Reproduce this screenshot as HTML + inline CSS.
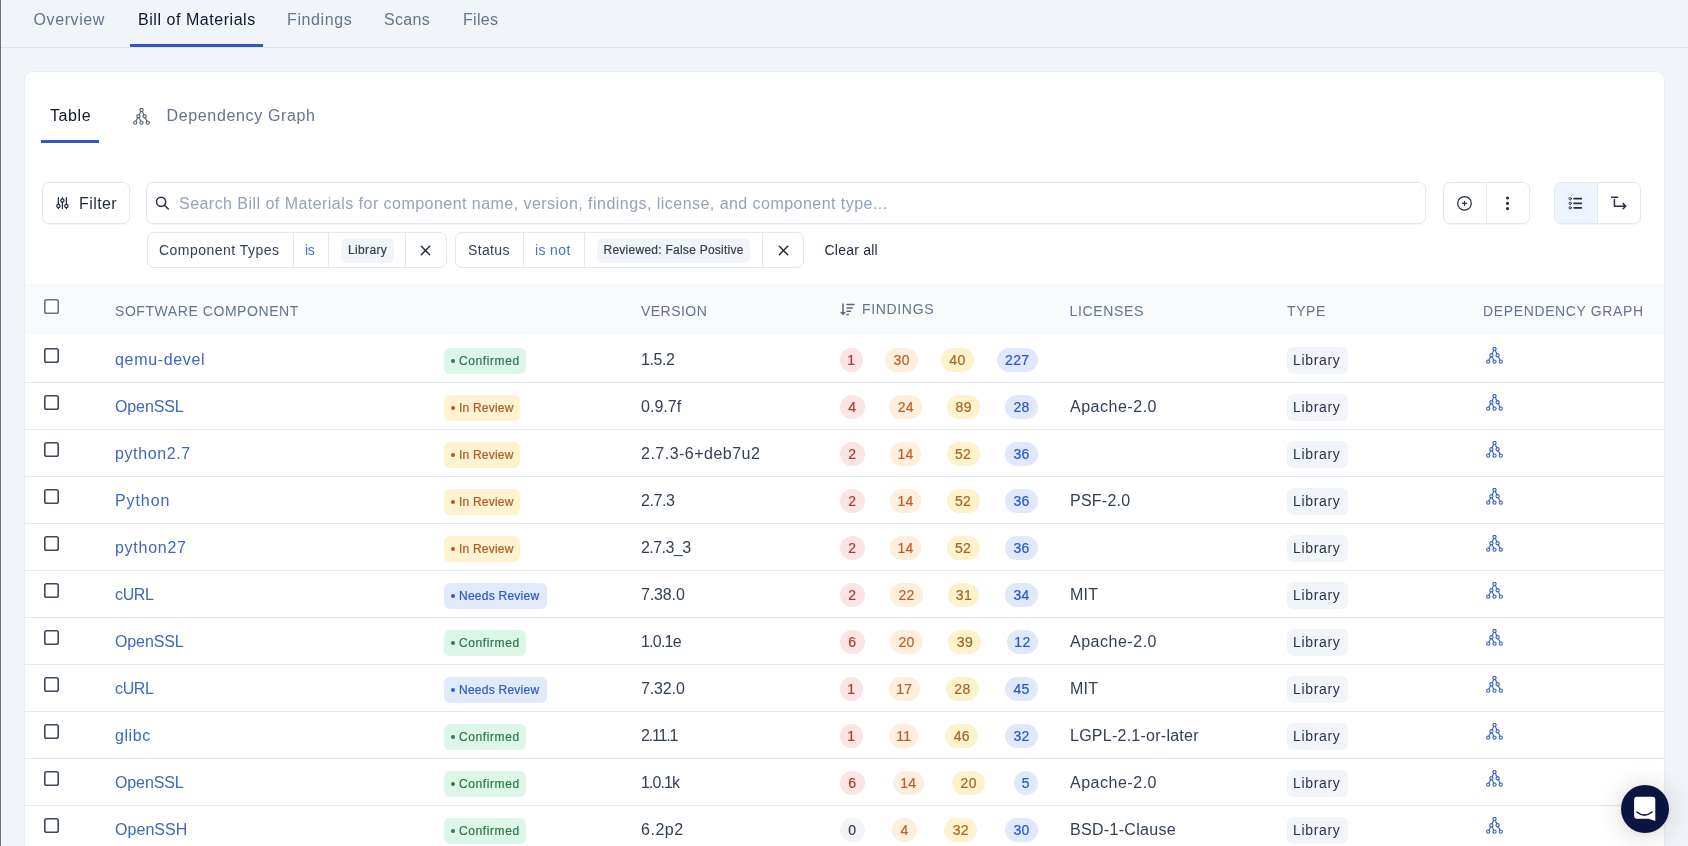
<!DOCTYPE html>
<html><head><meta charset="utf-8">
<style>
*{box-sizing:border-box;margin:0;padding:0}
html,body{width:1688px;height:846px;overflow:hidden}
body{background:#f1f4f9;font-family:"Liberation Sans",sans-serif;position:relative;color:#334155}
.abs{position:absolute;white-space:nowrap}
div{position:absolute;white-space:nowrap}
.lbar{left:0;top:0;width:1px;height:846px;background:#6b7280}
.topsep{left:1px;top:47px;width:1687px;height:1px;background:#e2e6ec}
.ttab{top:10px;font-size:16px;line-height:20px;color:#64748b;letter-spacing:.5px}
.ttab.act{color:#0f172a}
.tund{left:130px;top:44px;width:133px;height:3px;background:#2f5cb8}
.card{left:25px;top:72px;width:1639px;height:800px;background:#fff;border-radius:8px;box-shadow:0 0 0 1px #e9edf2,0 1px 3px rgba(15,23,42,.05)}
.itab{top:106px;font-size:16px;line-height:20px;letter-spacing:.55px}
.iund{left:41px;top:140px;width:58px;height:3px;background:#2f5cb8}
.btn{top:182px;height:42px;border:1px solid #e4e7ee;border-radius:7px;background:#fff;box-shadow:0 1px 1px rgba(15,23,42,.04)}
.fchip{top:232px;height:36px;border:1px solid #e4e7ee;border-radius:7px;background:#fff;font-size:14px;line-height:34px;color:#334155}
.fchip span{position:absolute;top:0;white-space:nowrap}
.fdiv{position:absolute;top:0;width:1px;height:34px;background:#e4e7ee}
.val{position:absolute;top:5px;height:25px;border-radius:6px;background:#f1f4f9;font-size:12px;line-height:25px;color:#334155;-webkit-text-stroke:.2px #334155}
.thead{left:25px;top:284px;width:1639px;height:51px;background:#f8fafc}
.th{top:303px;font-size:14px;line-height:16px;color:#64748b;letter-spacing:.5px}
.cb{position:absolute}
.nm{left:115px;font-size:16px;line-height:20px;color:#3d68c0;letter-spacing:.5px}
.ver{left:641px;font-size:16px;line-height:20px;color:#334155;letter-spacing:.35px}
.lic{left:1070px;font-size:16px;line-height:20px;color:#334155;letter-spacing:.45px}
.badge{left:444px;height:26px;border-radius:6px;font-size:12px;line-height:26px;padding-left:15px;-webkit-text-stroke:.22px currentColor}
.badge i{position:absolute;left:7px;top:11px;width:4px;height:4px;border-radius:50%}
.bg{background:#dcf7e7;color:#2f7652}.bg i{background:#2f7652}
.by{background:#fdf3d0;color:#b25a28}.by i{background:#b25a28}
.bb{background:#e0eafb;color:#2f5bc2}.bb i{background:#2f5bc2}
.pill{height:24px;border-radius:12px;font-size:14px;line-height:24px;text-align:center;letter-spacing:.3px;-webkit-text-stroke:.2px currentColor}
.pr{background:#fbe4e4;color:#b2382a}
.po{background:#fdeedd;color:#bd5e28}
.py{background:#fcf3cd;color:#a66526}
.pb{background:#dfe9fb;color:#2a56cf}
.pg{background:#f1f3f6;color:#334155}
.lib{left:1287px;width:61px;height:27px;border-radius:6px;background:#f1f4f9;font-size:14px;line-height:27px;color:#283447;padding-left:6px;letter-spacing:.65px}
.rsep{left:25px;width:1639px;height:1px;background:#e5e8ee}
.chat{left:1620.5px;top:785px;width:48px;height:48px;border-radius:50%;background:#0c1440;box-shadow:0 1px 6px rgba(0,0,0,.06),0 2px 32px rgba(0,0,0,.16)}
</style></head>
<body style="will-change:transform">
<div class="lbar"></div>
<div class="topsep"></div>
<div class="ttab" style="left:33.5px;letter-spacing:.596px">Overview</div>
<div class="ttab act" style="left:138px;letter-spacing:.545px">Bill of Materials</div>
<div class="ttab" style="left:287px;letter-spacing:.603px">Findings</div>
<div class="ttab" style="left:384px;letter-spacing:.308px">Scans</div>
<div class="ttab" style="left:463px;letter-spacing:.305px">Files</div>
<div class="tund"></div>

<div class="card"></div>
<div class="itab" style="left:50px;color:#0f172a;letter-spacing:.587px">Table</div>
<svg class="abs" style="left:132.5px;top:108px" width="17" height="17" viewBox="0 0 17 17" fill="none" stroke="#5a6779" stroke-width="1.15" stroke-linecap="round"><path d="M7.8 3.3L6.1 6.8M9.2 3.3L10.9 6.8M4.8 9.6L2.9 13.2M6.0 9.6L7.8 13.2M12.2 9.6L14.1 13.2"/><circle cx="8.5" cy="1.9" r="1.6"/><circle cx="5.4" cy="8.2" r="1.6"/><circle cx="11.6" cy="8.2" r="1.6"/><circle cx="2.2" cy="14.6" r="1.6"/><circle cx="8.5" cy="14.6" r="1.6"/><circle cx="14.8" cy="14.6" r="1.6"/></svg>
<div class="itab" style="left:166.5px;color:#64748b;letter-spacing:.649px">Dependency Graph</div>
<div class="iund"></div>

<!-- toolbar -->
<div class="btn" style="left:42px;width:88px">
  <div style="left:36px;top:11px;font-size:16px;line-height:20px;color:#1e293b;letter-spacing:.415px">Filter</div>
</div>
<svg class="abs" style="left:54px;top:195px" width="17" height="17" viewBox="0 0 17 17" fill="#fff" stroke="#253043" stroke-width="1.3" stroke-linecap="round">
  <path d="M4.4 2.6V13.6M8.4 2.6V13.6M12.4 2.6V13.6"/>
  <circle cx="4.4" cy="11.0" r="1.6"/><circle cx="8.4" cy="5.5" r="1.6"/><circle cx="12.4" cy="11.0" r="1.6"/>
</svg>
<div class="btn" style="left:146px;width:1280px">
  <div style="left:32px;top:11px;font-size:16px;line-height:20px;color:#94a3b8;letter-spacing:.462px">Search Bill of Materials for component name, version, findings, license, and component type...</div>
</div>
<svg class="abs" style="left:154px;top:195px" width="17" height="17" viewBox="0 0 17 17" fill="none" stroke="#253043" stroke-width="1.5" stroke-linecap="round">
  <circle cx="7.1" cy="6.8" r="4.6"/><path d="M10.5 10.2L14.3 14.0"/>
</svg>
<div class="btn" style="left:1443px;width:87px">
  <div style="left:42px;top:0;width:1px;height:40px;background:#e3e8ef"></div>
</div>
<svg class="abs" style="left:1456px;top:195px" width="17" height="17" viewBox="0 0 17 17" fill="none" stroke="#253043" stroke-width="1.25" stroke-linecap="round">
  <circle cx="8.5" cy="8.35" r="6.8"/><path d="M6.4 8.35H10.6M8.5 6.25V10.45"/>
</svg>
<svg class="abs" style="left:1504px;top:195px" width="7" height="17" viewBox="0 0 7 17" fill="#253043">
  <circle cx="3.5" cy="3" r="1.55"/><circle cx="3.5" cy="8.4" r="1.55"/><circle cx="3.5" cy="13.6" r="1.55"/>
</svg>
<div class="btn" style="left:1554px;width:87px;overflow:hidden">
  <div style="left:0;top:0;width:42px;height:40px;background:#eef4fd"></div>
  <div style="left:42px;top:0;width:1px;height:40px;background:#e3e8ef"></div>
</div>
<svg class="abs" style="left:1566px;top:194px" width="18" height="17" viewBox="0 0 18 17" fill="none" stroke="#253043" stroke-linecap="round">
  <path d="M8.1 4.7H15.3M8.1 9.35H15.3M8.1 13.8H15.3" stroke-width="1.8"/>
  <circle cx="4.2" cy="4.7" r="1.2" stroke-width=".9"/><circle cx="4.2" cy="9.35" r="1.2" stroke-width=".9"/><circle cx="4.2" cy="13.8" r="1.2" stroke-width=".9"/>
</svg>
<svg class="abs" style="left:1608px;top:194px" width="20" height="17" viewBox="0 0 20 17" fill="none" stroke="#253043" stroke-width="1.5" stroke-linecap="round" stroke-linejoin="round">
  <path d="M3.5 3.25H9.7M6.4 5.4V12.2H17.6M15.1 9.6L17.7 12.2L15.1 14.8"/>
</svg>

<!-- filter chips -->
<div class="fchip" style="left:147px;width:300px">
  <span style="left:11px;letter-spacing:.47px">Component Types</span>
  <div class="fdiv" style="left:145px"></div>
  <span style="left:157px;color:#4a72c4;letter-spacing:-.3px">is</span>
  <div class="fdiv" style="left:180px"></div>
  <div class="val" style="left:193px;width:53px;padding-left:7px;letter-spacing:.353px">Library</div>
  <div class="fdiv" style="left:257px"></div>
  <svg style="position:absolute;left:272px;top:11.5px" width="11" height="11" viewBox="0 0 11 11" stroke="#1f2937" stroke-width="1.45" stroke-linecap="round"><path d="M1.3 1.3L9.7 9.7M9.7 1.3L1.3 9.7"/></svg>
</div>
<div class="fchip" style="left:455px;width:349px">
  <span style="left:12px;letter-spacing:.342px">Status</span>
  <div class="fdiv" style="left:67px"></div>
  <span style="left:79px;color:#4a72c4;letter-spacing:.366px">is not</span>
  <div class="fdiv" style="left:128px"></div>
  <div class="val" style="left:141px;width:153px;padding-left:6.5px;letter-spacing:.257px">Reviewed: False Positive</div>
  <div class="fdiv" style="left:306px"></div>
  <svg style="position:absolute;left:321.5px;top:11.5px" width="11" height="11" viewBox="0 0 11 11" stroke="#1f2937" stroke-width="1.45" stroke-linecap="round"><path d="M1.3 1.3L9.7 9.7M9.7 1.3L1.3 9.7"/></svg>
</div>
<div style="left:824.5px;top:240px;font-size:14px;line-height:20px;color:#1e293b;letter-spacing:.232px">Clear all</div>

<!-- table header -->
<div class="thead"></div>
<svg class="cb" style="left:43px;top:298px" width="17" height="17" viewBox="0 0 17 17"><rect x="1.8" y="1.8" width="13.4" height="13.4" rx="1.8" fill="#fff" stroke="#687488" stroke-width="1.6"/></svg>
<div class="th" style="left:115px;letter-spacing:.562px">SOFTWARE COMPONENT</div>
<div class="th" style="left:641px;letter-spacing:.466px">VERSION</div>
<svg class="abs" style="left:840px;top:303px" width="15" height="13" viewBox="0 0 15 13" fill="none" stroke="#5b6778" stroke-width="1.5" stroke-linecap="round" stroke-linejoin="round">
  <path d="M3 1V11.3M1.2 9.5L3 11.3L4.8 9.5M7 1.5H14M7 4.9H12.2M7 8.3H10.3M7 11.5H8.3"/>
</svg>
<div class="th" style="left:862px;top:301px;letter-spacing:.664px">FINDINGS</div>
<div class="th" style="left:1069.5px;letter-spacing:.656px">LICENSES</div>
<div class="th" style="left:1287px;letter-spacing:.591px">TYPE</div>
<div class="th" style="left:1483px;letter-spacing:.633px">DEPENDENCY GRAPH</div>

<svg class="cb" style="left:43px;top:347px" width="17" height="17" viewBox="0 0 17 17"><rect x="1.8" y="1.8" width="13.4" height="13.4" rx="1.8" fill="none" stroke="#3d495b" stroke-width="1.6"/></svg>
<div class="nm" style="top:350px;letter-spacing:0.673px">qemu-devel</div>
<div class="badge bg" style="top:348px;width:82px;letter-spacing:0.6px"><i></i>Confirmed</div>
<div class="ver" style="top:350px;letter-spacing:-0.447px">1.5.2</div>
<div class="pill pr" style="left:840.0px;top:348px;width:22.6px">1</div>
<div class="pill po" style="left:885.2px;top:348px;width:33.0px">30</div>
<div class="pill py" style="left:940.9px;top:348px;width:33.0px">40</div>
<div class="pill pb" style="left:996.5px;top:348px;width:41.5px">227</div>
<div class="lib" style="top:347px">Library</div>
<svg class="abs" style="left:1486px;top:347px" width="17" height="17" viewBox="0 0 17 17" fill="none" stroke="#3d68c0" stroke-width="1.15" stroke-linecap="round"><path d="M7.8 3.3L6.1 6.8M9.2 3.3L10.9 6.8M4.8 9.6L2.9 13.2M6.0 9.6L7.8 13.2M12.2 9.6L14.1 13.2"/><circle cx="8.5" cy="1.9" r="1.6"/><circle cx="5.4" cy="8.2" r="1.6"/><circle cx="11.6" cy="8.2" r="1.6"/><circle cx="2.2" cy="14.6" r="1.6"/><circle cx="8.5" cy="14.6" r="1.6"/><circle cx="14.8" cy="14.6" r="1.6"/></svg>
<div class="rsep" style="top:382px"></div>
<svg class="cb" style="left:43px;top:394px" width="17" height="17" viewBox="0 0 17 17"><rect x="1.8" y="1.8" width="13.4" height="13.4" rx="1.8" fill="none" stroke="#3d495b" stroke-width="1.6"/></svg>
<div class="nm" style="top:397px;letter-spacing:-0.114px">OpenSSL</div>
<div class="badge by" style="top:395px;width:76px;letter-spacing:0.21px"><i></i>In Review</div>
<div class="ver" style="top:397px;letter-spacing:0.023px">0.9.7f</div>
<div class="pill pr" style="left:840.0px;top:395px;width:24.5px">4</div>
<div class="pill po" style="left:889.3px;top:395px;width:33.0px">24</div>
<div class="pill py" style="left:947.2px;top:395px;width:33.0px">89</div>
<div class="pill pb" style="left:1005.0px;top:395px;width:33.0px">28</div>
<div class="lic" style="top:397px;letter-spacing:0.518px">Apache-2.0</div>
<div class="lib" style="top:394px">Library</div>
<svg class="abs" style="left:1486px;top:394px" width="17" height="17" viewBox="0 0 17 17" fill="none" stroke="#3d68c0" stroke-width="1.15" stroke-linecap="round"><path d="M7.8 3.3L6.1 6.8M9.2 3.3L10.9 6.8M4.8 9.6L2.9 13.2M6.0 9.6L7.8 13.2M12.2 9.6L14.1 13.2"/><circle cx="8.5" cy="1.9" r="1.6"/><circle cx="5.4" cy="8.2" r="1.6"/><circle cx="11.6" cy="8.2" r="1.6"/><circle cx="2.2" cy="14.6" r="1.6"/><circle cx="8.5" cy="14.6" r="1.6"/><circle cx="14.8" cy="14.6" r="1.6"/></svg>
<div class="rsep" style="top:429px"></div>
<svg class="cb" style="left:43px;top:441px" width="17" height="17" viewBox="0 0 17 17"><rect x="1.8" y="1.8" width="13.4" height="13.4" rx="1.8" fill="none" stroke="#3d495b" stroke-width="1.6"/></svg>
<div class="nm" style="top:444px;letter-spacing:0.602px">python2.7</div>
<div class="badge by" style="top:442px;width:76px;letter-spacing:0.21px"><i></i>In Review</div>
<div class="ver" style="top:444px;letter-spacing:0.489px">2.7.3-6+deb7u2</div>
<div class="pill pr" style="left:840.0px;top:442px;width:24.5px">2</div>
<div class="pill po" style="left:890.0px;top:442px;width:31.1px">14</div>
<div class="pill py" style="left:946.5px;top:442px;width:33.0px">52</div>
<div class="pill pb" style="left:1005.0px;top:442px;width:33.0px">36</div>
<div class="lib" style="top:441px">Library</div>
<svg class="abs" style="left:1486px;top:441px" width="17" height="17" viewBox="0 0 17 17" fill="none" stroke="#3d68c0" stroke-width="1.15" stroke-linecap="round"><path d="M7.8 3.3L6.1 6.8M9.2 3.3L10.9 6.8M4.8 9.6L2.9 13.2M6.0 9.6L7.8 13.2M12.2 9.6L14.1 13.2"/><circle cx="8.5" cy="1.9" r="1.6"/><circle cx="5.4" cy="8.2" r="1.6"/><circle cx="11.6" cy="8.2" r="1.6"/><circle cx="2.2" cy="14.6" r="1.6"/><circle cx="8.5" cy="14.6" r="1.6"/><circle cx="14.8" cy="14.6" r="1.6"/></svg>
<div class="rsep" style="top:476px"></div>
<svg class="cb" style="left:43px;top:488px" width="17" height="17" viewBox="0 0 17 17"><rect x="1.8" y="1.8" width="13.4" height="13.4" rx="1.8" fill="none" stroke="#3d495b" stroke-width="1.6"/></svg>
<div class="nm" style="top:491px;letter-spacing:0.917px">Python</div>
<div class="badge by" style="top:489px;width:76px;letter-spacing:0.21px"><i></i>In Review</div>
<div class="ver" style="top:491px;letter-spacing:-0.422px">2.7.3</div>
<div class="pill pr" style="left:840.0px;top:489px;width:24.5px">2</div>
<div class="pill po" style="left:890.0px;top:489px;width:31.1px">14</div>
<div class="pill py" style="left:946.5px;top:489px;width:33.0px">52</div>
<div class="pill pb" style="left:1005.0px;top:489px;width:33.0px">36</div>
<div class="lic" style="top:491px;letter-spacing:0.235px">PSF-2.0</div>
<div class="lib" style="top:488px">Library</div>
<svg class="abs" style="left:1486px;top:488px" width="17" height="17" viewBox="0 0 17 17" fill="none" stroke="#3d68c0" stroke-width="1.15" stroke-linecap="round"><path d="M7.8 3.3L6.1 6.8M9.2 3.3L10.9 6.8M4.8 9.6L2.9 13.2M6.0 9.6L7.8 13.2M12.2 9.6L14.1 13.2"/><circle cx="8.5" cy="1.9" r="1.6"/><circle cx="5.4" cy="8.2" r="1.6"/><circle cx="11.6" cy="8.2" r="1.6"/><circle cx="2.2" cy="14.6" r="1.6"/><circle cx="8.5" cy="14.6" r="1.6"/><circle cx="14.8" cy="14.6" r="1.6"/></svg>
<div class="rsep" style="top:523px"></div>
<svg class="cb" style="left:43px;top:535px" width="17" height="17" viewBox="0 0 17 17"><rect x="1.8" y="1.8" width="13.4" height="13.4" rx="1.8" fill="none" stroke="#3d495b" stroke-width="1.6"/></svg>
<div class="nm" style="top:538px;letter-spacing:0.723px">python27</div>
<div class="badge by" style="top:536px;width:76px;letter-spacing:0.21px"><i></i>In Review</div>
<div class="ver" style="top:538px;letter-spacing:-0.547px">2.7.3_3</div>
<div class="pill pr" style="left:840.0px;top:536px;width:24.5px">2</div>
<div class="pill po" style="left:890.0px;top:536px;width:31.1px">14</div>
<div class="pill py" style="left:946.5px;top:536px;width:33.0px">52</div>
<div class="pill pb" style="left:1005.0px;top:536px;width:33.0px">36</div>
<div class="lib" style="top:535px">Library</div>
<svg class="abs" style="left:1486px;top:535px" width="17" height="17" viewBox="0 0 17 17" fill="none" stroke="#3d68c0" stroke-width="1.15" stroke-linecap="round"><path d="M7.8 3.3L6.1 6.8M9.2 3.3L10.9 6.8M4.8 9.6L2.9 13.2M6.0 9.6L7.8 13.2M12.2 9.6L14.1 13.2"/><circle cx="8.5" cy="1.9" r="1.6"/><circle cx="5.4" cy="8.2" r="1.6"/><circle cx="11.6" cy="8.2" r="1.6"/><circle cx="2.2" cy="14.6" r="1.6"/><circle cx="8.5" cy="14.6" r="1.6"/><circle cx="14.8" cy="14.6" r="1.6"/></svg>
<div class="rsep" style="top:570px"></div>
<svg class="cb" style="left:43px;top:582px" width="17" height="17" viewBox="0 0 17 17"><rect x="1.8" y="1.8" width="13.4" height="13.4" rx="1.8" fill="none" stroke="#3d495b" stroke-width="1.6"/></svg>
<div class="nm" style="top:585px;letter-spacing:-0.37px">cURL</div>
<div class="badge bb" style="top:583px;width:103px;letter-spacing:0.245px"><i></i>Needs Review</div>
<div class="ver" style="top:585px;letter-spacing:-0.137px">7.38.0</div>
<div class="pill pr" style="left:840.0px;top:583px;width:24.5px">2</div>
<div class="pill po" style="left:890.0px;top:583px;width:33.0px">22</div>
<div class="pill py" style="left:948.4px;top:583px;width:31.1px">31</div>
<div class="pill pb" style="left:1005.0px;top:583px;width:33.0px">34</div>
<div class="lic" style="top:585px;letter-spacing:0.213px">MIT</div>
<div class="lib" style="top:582px">Library</div>
<svg class="abs" style="left:1486px;top:582px" width="17" height="17" viewBox="0 0 17 17" fill="none" stroke="#3d68c0" stroke-width="1.15" stroke-linecap="round"><path d="M7.8 3.3L6.1 6.8M9.2 3.3L10.9 6.8M4.8 9.6L2.9 13.2M6.0 9.6L7.8 13.2M12.2 9.6L14.1 13.2"/><circle cx="8.5" cy="1.9" r="1.6"/><circle cx="5.4" cy="8.2" r="1.6"/><circle cx="11.6" cy="8.2" r="1.6"/><circle cx="2.2" cy="14.6" r="1.6"/><circle cx="8.5" cy="14.6" r="1.6"/><circle cx="14.8" cy="14.6" r="1.6"/></svg>
<div class="rsep" style="top:617px"></div>
<svg class="cb" style="left:43px;top:629px" width="17" height="17" viewBox="0 0 17 17"><rect x="1.8" y="1.8" width="13.4" height="13.4" rx="1.8" fill="none" stroke="#3d495b" stroke-width="1.6"/></svg>
<div class="nm" style="top:632px;letter-spacing:-0.114px">OpenSSL</div>
<div class="badge bg" style="top:630px;width:82px;letter-spacing:0.6px"><i></i>Confirmed</div>
<div class="ver" style="top:632px;letter-spacing:-0.777px">1.0.1e</div>
<div class="pill pr" style="left:840.0px;top:630px;width:24.5px">6</div>
<div class="pill po" style="left:890.0px;top:630px;width:33.0px">20</div>
<div class="pill py" style="left:948.4px;top:630px;width:33.0px">39</div>
<div class="pill pb" style="left:1006.9px;top:630px;width:31.1px">12</div>
<div class="lic" style="top:632px;letter-spacing:0.518px">Apache-2.0</div>
<div class="lib" style="top:629px">Library</div>
<svg class="abs" style="left:1486px;top:629px" width="17" height="17" viewBox="0 0 17 17" fill="none" stroke="#3d68c0" stroke-width="1.15" stroke-linecap="round"><path d="M7.8 3.3L6.1 6.8M9.2 3.3L10.9 6.8M4.8 9.6L2.9 13.2M6.0 9.6L7.8 13.2M12.2 9.6L14.1 13.2"/><circle cx="8.5" cy="1.9" r="1.6"/><circle cx="5.4" cy="8.2" r="1.6"/><circle cx="11.6" cy="8.2" r="1.6"/><circle cx="2.2" cy="14.6" r="1.6"/><circle cx="8.5" cy="14.6" r="1.6"/><circle cx="14.8" cy="14.6" r="1.6"/></svg>
<div class="rsep" style="top:664px"></div>
<svg class="cb" style="left:43px;top:676px" width="17" height="17" viewBox="0 0 17 17"><rect x="1.8" y="1.8" width="13.4" height="13.4" rx="1.8" fill="none" stroke="#3d495b" stroke-width="1.6"/></svg>
<div class="nm" style="top:679px;letter-spacing:-0.37px">cURL</div>
<div class="badge bb" style="top:677px;width:103px;letter-spacing:0.245px"><i></i>Needs Review</div>
<div class="ver" style="top:679px;letter-spacing:-0.137px">7.32.0</div>
<div class="pill pr" style="left:840.0px;top:677px;width:22.6px">1</div>
<div class="pill po" style="left:888.7px;top:677px;width:31.1px">17</div>
<div class="pill py" style="left:945.9px;top:677px;width:33.0px">28</div>
<div class="pill pb" style="left:1005.0px;top:677px;width:33.0px">45</div>
<div class="lic" style="top:679px;letter-spacing:0.213px">MIT</div>
<div class="lib" style="top:676px">Library</div>
<svg class="abs" style="left:1486px;top:676px" width="17" height="17" viewBox="0 0 17 17" fill="none" stroke="#3d68c0" stroke-width="1.15" stroke-linecap="round"><path d="M7.8 3.3L6.1 6.8M9.2 3.3L10.9 6.8M4.8 9.6L2.9 13.2M6.0 9.6L7.8 13.2M12.2 9.6L14.1 13.2"/><circle cx="8.5" cy="1.9" r="1.6"/><circle cx="5.4" cy="8.2" r="1.6"/><circle cx="11.6" cy="8.2" r="1.6"/><circle cx="2.2" cy="14.6" r="1.6"/><circle cx="8.5" cy="14.6" r="1.6"/><circle cx="14.8" cy="14.6" r="1.6"/></svg>
<div class="rsep" style="top:711px"></div>
<svg class="cb" style="left:43px;top:723px" width="17" height="17" viewBox="0 0 17 17"><rect x="1.8" y="1.8" width="13.4" height="13.4" rx="1.8" fill="none" stroke="#3d495b" stroke-width="1.6"/></svg>
<div class="nm" style="top:726px;letter-spacing:0.573px">glibc</div>
<div class="badge bg" style="top:724px;width:82px;letter-spacing:0.6px"><i></i>Confirmed</div>
<div class="ver" style="top:726px;letter-spacing:-1.2px">2.11.1</div>
<div class="pill pr" style="left:840.0px;top:724px;width:22.6px">1</div>
<div class="pill po" style="left:889.3px;top:724px;width:29.2px">11</div>
<div class="pill py" style="left:945.3px;top:724px;width:33.0px">46</div>
<div class="pill pb" style="left:1005.0px;top:724px;width:33.0px">32</div>
<div class="lic" style="top:726px;letter-spacing:0.252px">LGPL-2.1-or-later</div>
<div class="lib" style="top:723px">Library</div>
<svg class="abs" style="left:1486px;top:723px" width="17" height="17" viewBox="0 0 17 17" fill="none" stroke="#3d68c0" stroke-width="1.15" stroke-linecap="round"><path d="M7.8 3.3L6.1 6.8M9.2 3.3L10.9 6.8M4.8 9.6L2.9 13.2M6.0 9.6L7.8 13.2M12.2 9.6L14.1 13.2"/><circle cx="8.5" cy="1.9" r="1.6"/><circle cx="5.4" cy="8.2" r="1.6"/><circle cx="11.6" cy="8.2" r="1.6"/><circle cx="2.2" cy="14.6" r="1.6"/><circle cx="8.5" cy="14.6" r="1.6"/><circle cx="14.8" cy="14.6" r="1.6"/></svg>
<div class="rsep" style="top:758px"></div>
<svg class="cb" style="left:43px;top:770px" width="17" height="17" viewBox="0 0 17 17"><rect x="1.8" y="1.8" width="13.4" height="13.4" rx="1.8" fill="none" stroke="#3d495b" stroke-width="1.6"/></svg>
<div class="nm" style="top:773px;letter-spacing:-0.114px">OpenSSL</div>
<div class="badge bg" style="top:771px;width:82px;letter-spacing:0.6px"><i></i>Confirmed</div>
<div class="ver" style="top:773px;letter-spacing:-0.917px">1.0.1k</div>
<div class="pill pr" style="left:840.0px;top:771px;width:24.5px">6</div>
<div class="pill po" style="left:892.8px;top:771px;width:31.1px">14</div>
<div class="pill py" style="left:952.2px;top:771px;width:33.0px">20</div>
<div class="pill pb" style="left:1013.5px;top:771px;width:24.5px">5</div>
<div class="lic" style="top:773px;letter-spacing:0.518px">Apache-2.0</div>
<div class="lib" style="top:770px">Library</div>
<svg class="abs" style="left:1486px;top:770px" width="17" height="17" viewBox="0 0 17 17" fill="none" stroke="#3d68c0" stroke-width="1.15" stroke-linecap="round"><path d="M7.8 3.3L6.1 6.8M9.2 3.3L10.9 6.8M4.8 9.6L2.9 13.2M6.0 9.6L7.8 13.2M12.2 9.6L14.1 13.2"/><circle cx="8.5" cy="1.9" r="1.6"/><circle cx="5.4" cy="8.2" r="1.6"/><circle cx="11.6" cy="8.2" r="1.6"/><circle cx="2.2" cy="14.6" r="1.6"/><circle cx="8.5" cy="14.6" r="1.6"/><circle cx="14.8" cy="14.6" r="1.6"/></svg>
<div class="rsep" style="top:805px"></div>
<svg class="cb" style="left:43px;top:817px" width="17" height="17" viewBox="0 0 17 17"><rect x="1.8" y="1.8" width="13.4" height="13.4" rx="1.8" fill="none" stroke="#3d495b" stroke-width="1.6"/></svg>
<div class="nm" style="top:820px;letter-spacing:0.053px">OpenSSH</div>
<div class="badge bg" style="top:818px;width:82px;letter-spacing:0.6px"><i></i>Confirmed</div>
<div class="ver" style="top:820px;letter-spacing:0.54px">6.2p2</div>
<div class="pill pg" style="left:840.0px;top:818px;width:24.5px">0</div>
<div class="pill po" style="left:892.2px;top:818px;width:24.5px">4</div>
<div class="pill py" style="left:944.3px;top:818px;width:33.0px">32</div>
<div class="pill pb" style="left:1005.0px;top:818px;width:33.0px">30</div>
<div class="lic" style="top:820px;letter-spacing:0.313px">BSD-1-Clause</div>
<div class="lib" style="top:817px">Library</div>
<svg class="abs" style="left:1486px;top:817px" width="17" height="17" viewBox="0 0 17 17" fill="none" stroke="#3d68c0" stroke-width="1.15" stroke-linecap="round"><path d="M7.8 3.3L6.1 6.8M9.2 3.3L10.9 6.8M4.8 9.6L2.9 13.2M6.0 9.6L7.8 13.2M12.2 9.6L14.1 13.2"/><circle cx="8.5" cy="1.9" r="1.6"/><circle cx="5.4" cy="8.2" r="1.6"/><circle cx="11.6" cy="8.2" r="1.6"/><circle cx="2.2" cy="14.6" r="1.6"/><circle cx="8.5" cy="14.6" r="1.6"/><circle cx="14.8" cy="14.6" r="1.6"/></svg>
<div class="rsep" style="top:852px"></div>

<div class="chat"></div>
<svg class="abs" style="left:1633px;top:796px" width="24" height="26" viewBox="0 0 24 26">
  <path d="M4.1 0.8H19.3A3 3 0 0 1 22.3 3.8V25L15.6 22.7H4.1A3 3 0 0 1 1.1 19.7V3.8A3 3 0 0 1 4.1 0.8Z" fill="#fff"/>
  <path d="M3.9 16Q11.4 22.2 19 16" fill="none" stroke="#0c1440" stroke-width="1.6" stroke-linecap="round"/>
</svg>
</body></html>
